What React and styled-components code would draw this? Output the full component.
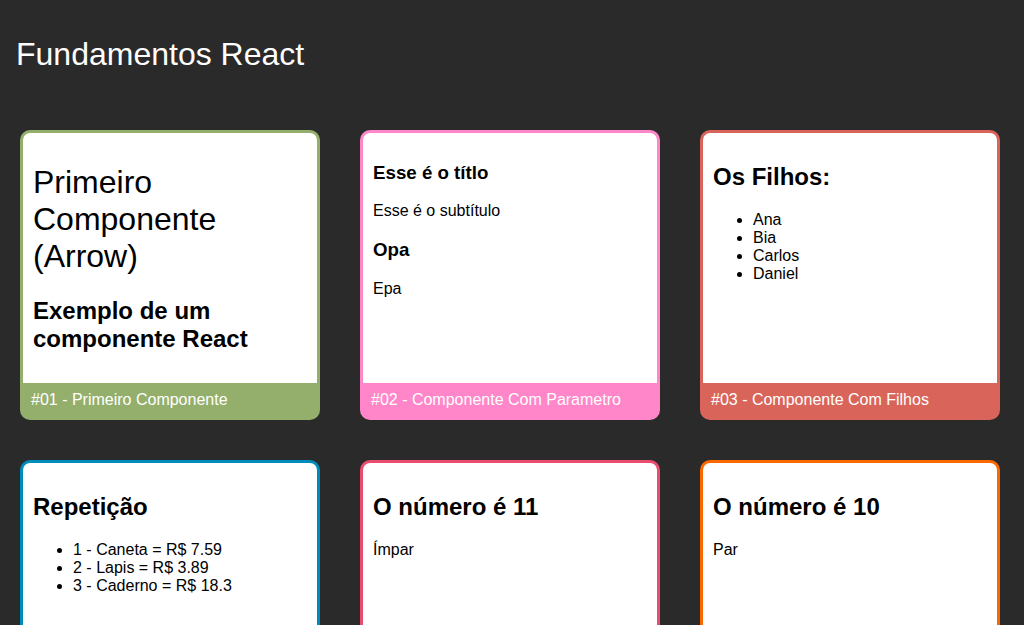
import React from "react";
import styled, { createGlobalStyle } from "styled-components";

const GlobalStyle = createGlobalStyle`
  html, body {
    margin: 0;
    padding: 0;
    background-color: #2a2a2a;
    font-family: "Liberation Sans", Arial, sans-serif;
  }

  ::-webkit-scrollbar {
    width: 5px;
  }
  ::-webkit-scrollbar-track {
    background: #c1c1c1;
  }
  ::-webkit-scrollbar-thumb {
    background: #a0a0a0;
  }
`;

const Page = styled.div`
  min-height: 1200px;
  color: #fff;
`;

const Title = styled.h1`
  margin: 0;
  padding: 36px 0 57px 16px;
  font-size: 32px;
  font-weight: normal;
`;

const Cards = styled.div`
  display: grid;
  grid-template-columns: repeat(3, 300px);
  gap: 40px;
  padding: 0 20px;
`;

const CardBox = styled.div`
  box-sizing: border-box;
  width: 300px;
  height: 290px;
  display: flex;
  flex-direction: column;
  border: 3px solid ${({ color }) => color};
  border-radius: 10px;
  background-color: ${({ color }) => color};
  overflow: hidden;
`;

const Content = styled.div`
  flex: 1;
  background-color: #fff;
  color: #000;
  padding: 10px;
  overflow: hidden;

  h1 {
    font-size: 32px;
    font-weight: normal;
    margin: 21.44px 0;
  }
  h2 {
    font-size: 24px;
    margin: 19.92px 0;
  }
  h3 {
    font-size: 18.72px;
    margin: 18.72px 0;
  }
  p {
    font-size: 16px;
    margin: 16px 0;
  }
  ul {
    margin: 16px 0;
    padding-left: 40px;
  }
`;

const Footer = styled.div`
  padding: 8px;
  font-size: 16px;
  color: #fff;
`;

function Card({ title, color, children }) {
  return (
    <CardBox color={color}>
      <Content>{children}</Content>
      <Footer>{title}</Footer>
    </CardBox>
  );
}

const produtos = [
  { id: 1, nome: "Caneta", preco: 7.59 },
  { id: 2, nome: "Lapis", preco: 3.89 },
  { id: 3, nome: "Caderno", preco: 18.3 },
];

function ParOuImpar({ numero }) {
  return (
    <div>
      <h2>O número é {numero}</h2>
      <p>{numero % 2 === 0 ? "Par" : "Ímpar"}</p>
    </div>
  );
}

export default function App() {
  return (
    <>
      <GlobalStyle />
      <Page>
        <Title>Fundamentos React</Title>
        <Cards>
          <Card title="#01 - Primeiro Componente" color="#94af6c">
            <h1>Primeiro Componente (Arrow)</h1>
            <h2>Exemplo de um componente React</h2>
          </Card>
          <Card title="#02 - Componente Com Parametro" color="#ff86c8">
            <h3>Esse é o títlo</h3>
            <p>Esse é o subtítulo</p>
            <h3>Opa</h3>
            <p>Epa</p>
          </Card>
          <Card title="#03 - Componente Com Filhos" color="#d9655a">
            <h2>Os Filhos:</h2>
            <ul>
              {["Ana", "Bia", "Carlos", "Daniel"].map((nome) => (
                <li key={nome}>{nome}</li>
              ))}
            </ul>
          </Card>
          <Card title="#04 - Repetição" color="#008cba">
            <h2>Repetição</h2>
            <ul>
              {produtos.map((p) => (
                <li key={p.id}>
                  {p.id} - {p.nome} = R$ {p.preco}
                </li>
              ))}
            </ul>
          </Card>
          <Card title="#05 - Renderização Condicional" color="#e94c6f">
            <ParOuImpar numero={11} />
          </Card>
          <Card title="#06 - Renderização Condicional" color="#fa6900">
            <ParOuImpar numero={10} />
          </Card>
        </Cards>
      </Page>
    </>
  );
}
